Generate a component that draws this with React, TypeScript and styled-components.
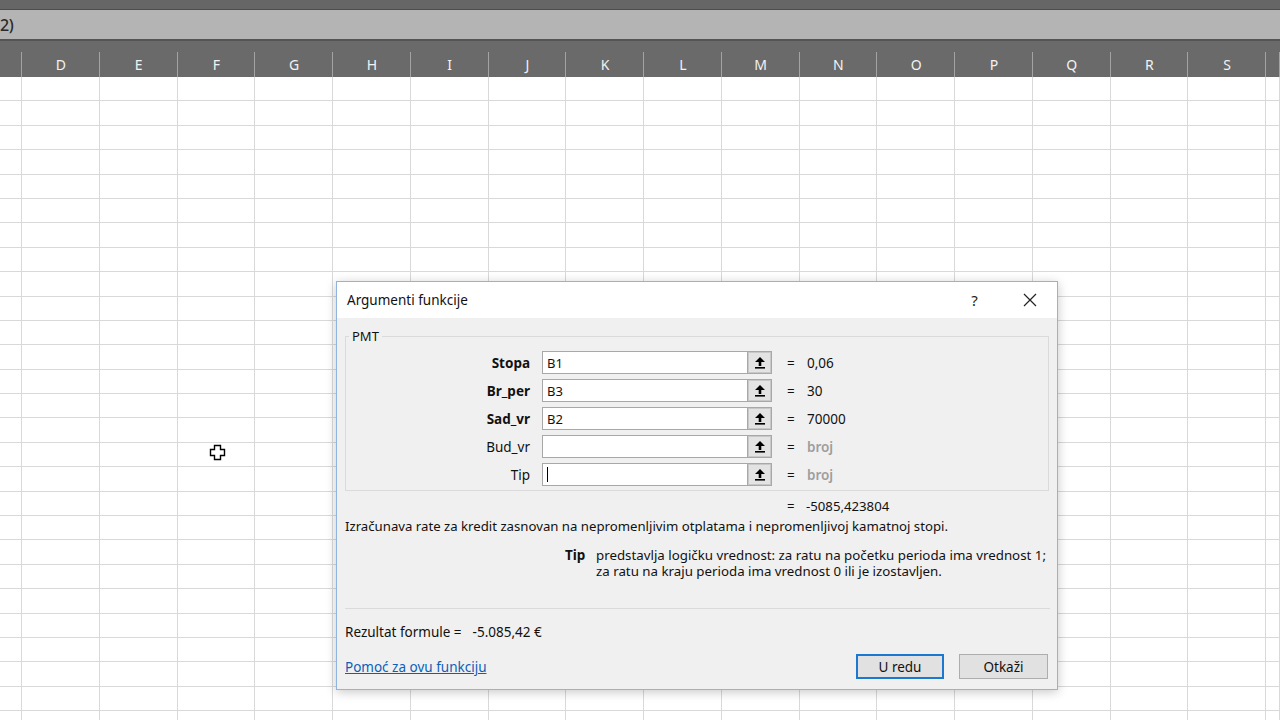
import React from "react";
import styled, { createGlobalStyle } from "styled-components";

const GlobalStyle = createGlobalStyle`
  html, body { margin: 0; padding: 0; }
  body { overflow: hidden; background: #fff; font-family: "Noto Sans", "Open Sans", sans-serif; }
`;

const COLS = ["D", "E", "F", "G", "H", "I", "J", "K", "L", "M", "N", "O", "P", "Q", "R", "S"];
const ROWS = 27;

const Page = styled.div`
  position: relative;
  width: 1280px;
  height: 720px;
  overflow: hidden;
  background: #fff;
  display: flex;
  flex-direction: column;
`;

const TopStrip = styled.div`
  height: 9px;
  background: #666666;
  border-bottom: 1px solid #4d4d4d;
  flex: none;
`;

const FormulaBand = styled.div`
  height: 29px;
  background: #b4b4b4;
  border-bottom: 2px solid #545454;
  display: flex;
  align-items: center;
  padding-left: 0;
  font-size: 16px;
  font-weight: 500;
  color: #2a2a2a;
  flex: none;
  letter-spacing: -0.5px;
`;

const HeaderRow = styled.div`
  height: 36px;
  background: #6a6a6a;
  display: grid;
  grid-template-columns: 22px repeat(16, 77.75px) 1fr;
  flex: none;
`;

const HeaderCell = styled.div`
  position: relative;
  display: flex;
  align-items: center;
  justify-content: center;
  padding-top: 11px;
  font-size: 14px;
  color: #f2f2f2;
  &::after {
    content: "";
    position: absolute;
    right: 0;
    top: 11px;
    bottom: 0;
    width: 1px;
    background: #a3a3a3;
  }
`;

const Sheet = styled.div`
  display: grid;
  grid-template-columns: 22px repeat(16, 77.75px) 1fr;
  grid-auto-rows: 24.4px;
  flex: 1;
`;

const Cell = styled.div`
  border-right: 1px solid #d9d9d9;
  border-bottom: 1px solid #d9d9d9;
  box-sizing: border-box;
`;

const CursorMark = styled.svg`
  position: absolute;
  left: 209px;
  top: 444px;
`;

const Dialog = styled.div`
  position: absolute;
  left: 336px;
  top: 281px;
  width: 722px;
  height: 409px;
  box-sizing: border-box;
  border: 1px solid #8fb4dd;
  background: #f0f0f0;
  box-shadow: 0 2px 10px rgba(0, 0, 0, 0.22);
  display: flex;
  flex-direction: column;
  font-size: 13.5px;
  color: #111;
`;

const TitleBar = styled.div`
  height: 36px;
  background: #fff;
  display: flex;
  align-items: center;
  padding-left: 10px;
  flex: none;
`;

const Title = styled.div`
  flex: 1;
  font-size: 13.5px;
  color: #111;
`;

const TitleButton = styled.div`
  width: 55px;
  display: flex;
  align-items: center;
  justify-content: center;
  font-size: 15px;
  color: #222;
`;

const Body = styled.div`
  display: flex;
  flex-direction: column;
  padding: 0 7px 0 8px;
  flex: 1;
`;

const Group = styled.fieldset`
  margin: 10px 1px 0 0;
  padding: 7px 0 4px 0;
  border: 1px solid #dadada;
  border-radius: 0;
`;

const Legend = styled.legend`
  padding: 0 3px;
  margin-left: 3px;
  font-size: 13px;
  line-height: 16px;
  color: #111;
`;

const ArgGrid = styled.div`
  display: grid;
  grid-template-columns: 184px 242px auto 1fr;
  grid-auto-rows: 23px;
  row-gap: 5px;
  align-items: center;
`;

const ArgLabel = styled.div<{ $bold?: boolean }>`
  text-align: right;
  font-weight: ${(p) => (p.$bold ? 700 : 400)};
  color: #111;
  white-space: nowrap;
`;

const InputFrame = styled.div`
  display: flex;
  height: 23px;
  box-sizing: border-box;
  border: 1px solid #a8a8a8;
  margin-left: 12px;
  width: 230px;
`;

const Field = styled.div`
  flex: 1;
  background: #fff;
  display: flex;
  align-items: center;
  padding-left: 4px;
  font-size: 13px;
  color: #111;
`;

const Caret = styled.span`
  display: inline-block;
  width: 1px;
  height: 15px;
  background: #000;
`;

const RefButton = styled.div`
  width: 23px;
  background: #e3e3e3;
  border-left: 1px solid #a8a8a8;
  box-shadow: inset 0 0 0 1px #c8c8c8;
  display: flex;
  align-items: center;
  justify-content: center;
`;

const Eq = styled.div`
  padding-left: 15px;
  width: 20px;
`;

const Value = styled.div<{ $muted?: boolean }>`
  color: ${(p) => (p.$muted ? "#9e9e9e" : "#111")};
  font-weight: ${(p) => (p.$muted ? 600 : 400)};
  white-space: nowrap;
`;

const ResultLine = styled.div`
  margin-top: 7px;
  line-height: 16px;
  display: flex;
  padding-left: 442px;
  font-size: 13.2px;
`;

const ResultEq = styled.span`
  width: 19px;
`;

const Description = styled.div`
  margin-top: 4px;
  line-height: 16px;
  white-space: nowrap;
  font-size: 13.2px;
`;

const TipBlock = styled.div`
  margin-top: 13px;
  display: flex;
  padding-left: 220px;
  line-height: 16px;
`;

const TipName = styled.div`
  font-weight: 700;
  width: 31px;
`;

const TipText = styled.div`
  white-space: nowrap;
  font-size: 13.3px;
`;

const Separator = styled.div`
  margin-top: 29px;
  height: 1px;
  background: #dadada;
`;

const FormulaResult = styled.div`
  margin-top: 15px;
  line-height: 16px;
  display: flex;
`;

const ResultValue = styled.span`
  margin-left: 11px;
`;

const Footer = styled.div`
  margin-top: 14px;
  display: flex;
  align-items: center;
  height: 25px;
`;

const HelpLink = styled.a`
  flex: 1;
  color: #0d5fb8;
  text-decoration: underline;
  cursor: pointer;
`;

const DlgButton = styled.button<{ $primary?: boolean }>`
  height: 25px;
  width: ${(p) => (p.$primary ? 88 : 89)}px;
  margin-left: ${(p) => (p.$primary ? 0 : 13)}px;
  margin-right: 2px;
  box-sizing: border-box;
  background: #e1e1e1;
  border: ${(p) => (p.$primary ? "2px solid #1a78d0" : "1px solid #adadad")};
  font-family: inherit;
  font-size: 13.5px;
  color: #111;
  padding: 0;
`;

const ArrowIcon = () => (
  <svg width="12" height="13" viewBox="0 0 12 13">
    <path d="M6 1 L11 6 L7.3 6 L7.3 10 L4.7 10 L4.7 6 L1 6 Z" fill="#000" />
    <rect x="1" y="11" width="10" height="1.6" fill="#000" />
  </svg>
);

const CloseIcon = () => (
  <svg width="14" height="14" viewBox="0 0 14 14">
    <path d="M1 1 L13 13 M13 1 L1 13" stroke="#222" strokeWidth="1.2" fill="none" />
  </svg>
);

type Arg = { label: string; bold: boolean; value: string; filled: string; muted?: boolean; caret?: boolean };

const ARGS: Arg[] = [
  { label: "Stopa", bold: true, value: "0,06", filled: "B1" },
  { label: "Br_per", bold: true, value: "30", filled: "B3" },
  { label: "Sad_vr", bold: true, value: "70000", filled: "B2" },
  { label: "Bud_vr", bold: false, value: "broj", filled: "", muted: true },
  { label: "Tip", bold: false, value: "broj", filled: "", muted: true, caret: true },
];

export default function App() {
  return (
    <>
      <GlobalStyle />
      <Page>
        <TopStrip />
        <FormulaBand>2)</FormulaBand>
        <HeaderRow>
          <HeaderCell />
          {COLS.map((c) => (
            <HeaderCell key={c}>{c}</HeaderCell>
          ))}
          <HeaderCell />
        </HeaderRow>
        <Sheet>
          {Array.from({ length: ROWS * 18 }).map((_, i) => (
            <Cell key={i} />
          ))}
        </Sheet>
        <CursorMark width="17" height="17" viewBox="0 0 17 17">
          <path
            d="M5.5 1.5 H11.5 V5.5 H15.5 V11.5 H11.5 V15.5 H5.5 V11.5 H1.5 V5.5 H5.5 Z"
            fill="#fff"
            stroke="#000"
            strokeWidth="1.4"
          />
        </CursorMark>
        <Dialog>
          <TitleBar>
            <Title>Argumenti funkcije</Title>
            <TitleButton>?</TitleButton>
            <TitleButton>
              <CloseIcon />
            </TitleButton>
          </TitleBar>
          <Body>
            <Group>
              <Legend>PMT</Legend>
              <ArgGrid>
                {ARGS.map((a) => (
                  <React.Fragment key={a.label}>
                    <ArgLabel $bold={a.bold}>{a.label}</ArgLabel>
                    <InputFrame>
                      <Field>{a.caret ? <Caret /> : a.filled}</Field>
                      <RefButton>
                        <ArrowIcon />
                      </RefButton>
                    </InputFrame>
                    <Eq>=</Eq>
                    <Value $muted={a.muted}>{a.value}</Value>
                  </React.Fragment>
                ))}
              </ArgGrid>
            </Group>
            <ResultLine>
              <ResultEq>=</ResultEq>
              <span>-5085,423804</span>
            </ResultLine>
            <Description>
              Izračunava rate za kredit zasnovan na nepromenljivim otplatama i nepromenljivoj kamatnoj stopi.
            </Description>
            <TipBlock>
              <TipName>Tip</TipName>
              <TipText>
                predstavlja logičku vrednost: za ratu na početku perioda ima vrednost 1;
                <br />
                za ratu na kraju perioda ima vrednost 0 ili je izostavljen.
              </TipText>
            </TipBlock>
            <Separator />
            <FormulaResult>
              <span>Rezultat formule =</span>
              <ResultValue>-5.085,42 €</ResultValue>
            </FormulaResult>
            <Footer>
              <HelpLink>Pomoć za ovu funkciju</HelpLink>
              <DlgButton $primary>U redu</DlgButton>
              <DlgButton>Otkaži</DlgButton>
            </Footer>
          </Body>
        </Dialog>
      </Page>
    </>
  );
}
